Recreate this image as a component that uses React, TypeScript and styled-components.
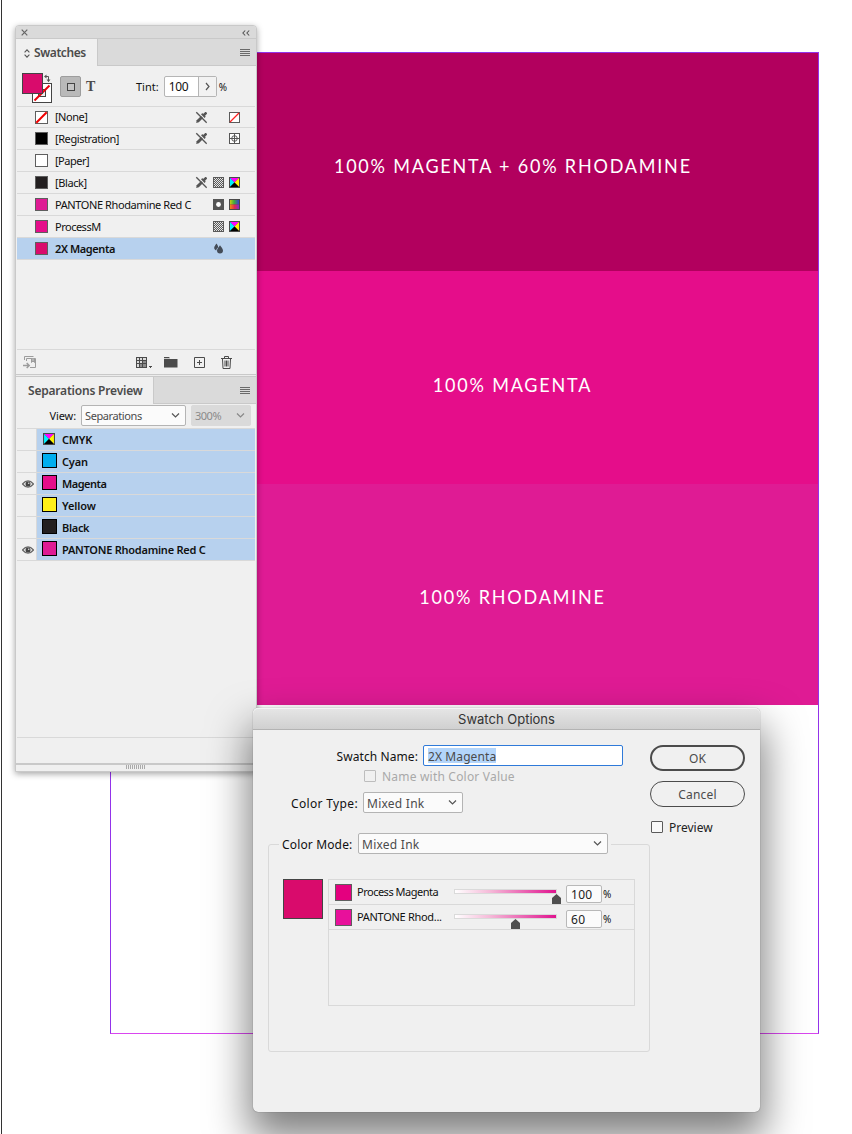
import React from "react";
import styled, { createGlobalStyle, css } from "styled-components";

const GlobalStyle = createGlobalStyle`
  *, *::before, *::after { box-sizing: border-box; }
  html, body { margin: 0; padding: 0; }
  body { background: #fff; overflow: hidden; }
`;

const uiFont = `"Noto Sans", "Open Sans", sans-serif`;
const line = "#d9d9d9";
const ink = "#4b4b4b";
const highlight = "#b7d1ee";

/* ---------- Desktop and artboard ---------- */

const Desktop = styled.main`
  position: relative;
  width: 852px;
  height: 1134px;
  overflow: hidden;
  background: #fff;
  border-left: 1px solid #fff;
  font-family: ${uiFont};
  font-size: 11px;
  color: #111;
  &::before {
    content: "";
    display: block;
    width: 1px;
    height: 100%;
    background: #333;
  }
`;

const Artboard = styled.section`
  position: absolute;
  left: 109px;
  top: 52px;
  width: 709px;
  height: 982px;
  border: 1px solid #9333ea;
  border-bottom-color: #d946ef;
  display: flex;
  flex-direction: column;
`;

const Band = styled.div<{ $color: string; $height: number; $drop: number }>`
  height: ${(p) => p.$height}px;
  background: ${(p) => p.$color};
  display: flex;
  align-items: center;
  justify-content: center;
  padding: ${(p) => p.$drop}px 0 0 96px;
`;

const BandText = styled.span`
  font-family: Lato, sans-serif;
  font-size: 20px;
  line-height: 24px;
  letter-spacing: 2px;
  transform: scaleX(0.9);
  color: #fff;
  white-space: nowrap;
`;

/* ---------- Panel dock ---------- */

const Dock = styled.aside`
  position: absolute;
  left: 14px;
  top: 25px;
  width: 242px;
  height: 747px;
  display: flex;
  flex-direction: column;
  background: #f0f0f0;
  border: 1px solid #c9c9c9;
  border-radius: 4px 4px 0 0;
  box-shadow: 0 2px 6px rgba(0, 0, 0, 0.35);
  overflow: hidden;
`;

const DockBar = styled.header`
  height: 13px;
  flex: none;
  display: flex;
  align-items: center;
  justify-content: space-between;
  padding: 1px 6px 0 5px;
  background: #dadada;
  border-bottom: 1px solid #c9c9c9;
`;

const TabRow = styled.div`
  height: 27px;
  flex: none;
  display: flex;
`;

const Tab = styled.div<{ $width: number; $indent: number }>`
  width: ${(p) => p.$width}px;
  padding: 1px 0 0 ${(p) => p.$indent}px;
  display: flex;
  align-items: center;
  gap: 4px;
  border-right: 1px solid #c9c9c9;
  color: ${ink};
`;

const TabFill = styled.div`
  flex: 1;
  display: flex;
  align-items: center;
  justify-content: flex-end;
  padding: 1px 6px 0 0;
  background: #dadada;
  border-bottom: 1px solid #c9c9c9;
`;

const Txt = styled.span<{ $size?: number; $track?: number; $bold?: boolean; $color?: string; $down?: number }>`
  min-width: 0;
  padding-top: ${(p) => p.$down ?? 0}px;
  font-size: ${(p) => p.$size ?? 11}px;
  line-height: 16px;
  letter-spacing: ${(p) => p.$track ?? 0}px;
  font-weight: ${(p) => (p.$bold ? 600 : 400)};
  color: ${(p) => p.$color ?? "inherit"};
  white-space: nowrap;
`;

const TintBar = styled.div`
  height: 40px;
  flex: none;
  display: flex;
  align-items: center;
  padding: 1px 0 0 6px;
`;

const FillStrokeBox = styled.div`
  width: 31px;
  padding-top: 3px;
  svg { display: block; }
`;

const TextToggle = styled.span`
  width: 12px;
  margin-left: 5px;
  font: 700 14px/16px "Liberation Serif", serif;
  color: ${ink};
`;

const FormatToggle = styled.div`
  width: 21px;
  height: 21px;
  margin-left: 7px;
  border: 1px solid #9d9d9d;
  border-radius: 2px;
  background: #b9b9b9;
  display: grid;
  place-items: center;
`;

const TintField = styled.div`
  width: 53px;
  height: 21px;
  margin: 0 2px 0 5px;
  border: 1px solid #b5b5b5;
  border-radius: 2px;
  background: #fff;
  display: flex;
  align-items: center;
  padding-left: 4px;
`;

const TintStep = styled.span`
  width: 18px;
  height: 19px;
  margin-left: auto;
  background: #f2f2f2;
  border-left: 1px solid #b5b5b5;
  display: grid;
  place-items: center;
`;

const SwatchList = styled.div`
  height: 244px;
  flex: none;
  margin: 0 1px;
  border-top: 1px solid ${line};
  border-bottom: 1px solid ${line};
`;

const SwatchRow = styled.div<{ $active?: boolean }>`
  height: 22px;
  display: flex;
  align-items: center;
  gap: 7px;
  padding: 0 15px 0 18px;
  border-bottom: 1px solid ${line};
  background: ${(p) => (p.$active ? highlight : "transparent")};
  &:first-child { height: 21px; }
`;

const Chip = styled.span<{ $color: string; $size?: number; $edge?: string }>`
  width: ${(p) => p.$size ?? 13}px;
  height: ${(p) => p.$size ?? 13}px;
  flex: none;
  background: ${(p) => p.$color};
  border: 1px solid ${(p) => p.$edge ?? "#5e5e5e"};
`;

const RowIcons = styled.div`
  flex: none;
  margin-left: auto;
  display: grid;
  grid-template-columns: 13px 11px 11px;
  column-gap: 5px;
  align-items: center;
  svg { display: block; }
`;

const PanelFooter = styled.div`
  height: 24px;
  flex: none;
  display: flex;
  align-items: center;
  padding: 0 24px 0 7px;
`;

const FooterTools = styled.div`
  margin-left: auto;
  display: flex;
  align-items: center;
`;

const Gap = styled.span<{ $w: number }>`
  width: ${(p) => p.$w}px;
`;

const PanelSplit = styled.div`
  height: 3px;
  flex: none;
  background: #ececec;
  border-top: 1px solid #c9c9c9;
  border-bottom: 1px solid #c9c9c9;
`;

const ViewBar = styled.div`
  height: 24px;
  flex: none;
  display: flex;
  align-items: flex-start;
  justify-content: flex-end;
  padding: 1px 5px 0 0;
  gap: 5px;
`;

const Select = styled.div<{ $width: number; $disabled?: boolean }>`
  width: ${(p) => p.$width}px;
  height: 21px;
  flex: none;
  display: flex;
  align-items: center;
  justify-content: space-between;
  padding: 0 5px 0 3px;
  border: 1px solid #b4b4b4;
  border-radius: 2px;
  background: #fbfbfb;
  color: ${ink};
  ${(p) =>
    p.$disabled &&
    css`
      background: #dadada;
      border-color: #dadada;
      color: #8a8a8a;
    `}
`;

const InkList = styled.div`
  height: 310px;
  flex: none;
  margin: 0 1px;
  border-top: 1px solid ${line};
  border-bottom: 1px solid ${line};
`;

const InkRow = styled.div`
  height: 22px;
  display: flex;
  border-bottom: 1px solid ${line};
`;

const EyeCell = styled.div`
  width: 20px;
  display: grid;
  place-items: center;
  padding-left: 3px;
  border-right: 1px solid ${line};
`;

const InkCell = styled.div`
  flex: 1;
  display: flex;
  align-items: center;
  background: ${highlight};
  padding-left: 5px;
`;

const InkMark = styled.span`
  width: 20px;
  display: flex;
  padding: 0 0 2px 0;
  svg { margin-left: 1px; }
`;

const DockFoot = styled.footer`
  flex: 1;
  display: flex;
  flex-direction: column;
  justify-content: flex-end;
`;

const GripBar = styled.div`
  height: 8px;
  border-top: 2px solid #c9c9c9;
  display: flex;
  justify-content: center;
  padding-right: 2px;
  gap: 1px;
`;

const GripTick = styled.i`
  width: 1px;
  height: 4px;
  background: #aaa;
`;

/* ---------- Dialog ---------- */

const Dialog = styled.section`
  position: absolute;
  left: 252px;
  top: 708px;
  width: 507px;
  height: 404px;
  display: flex;
  flex-direction: column;
  background: #f0f0f0;
  border-radius: 5px;
  box-shadow: 0 0 1px rgba(0, 0, 0, 0.6), 0 22px 40px 4px rgba(0, 0, 0, 0.5);
`;

const TitleBar = styled.header`
  height: 22px;
  flex: none;
  display: flex;
  align-items: center;
  justify-content: center;
  border-bottom: 1px solid #b3b3b3;
  border-radius: 5px 5px 0 0;
  background: linear-gradient(#e6e6e6, #d0d0d0);
  box-shadow: inset 0 1px 0 #f4f4f4;
  font-family: Inter, Roboto, sans-serif;
  color: #333;
`;

const DialogBody = styled.div`
  flex: 1;
  display: flex;
  padding: 15px 15px 0 15px;
`;

const Form = styled.div`
  width: 382px;
  display: flex;
  flex-direction: column;
`;

const FieldRow = styled.div<{ $indent: number; $height: number; $top?: number; $gap: number }>`
  height: ${(p) => p.$height}px;
  margin-top: ${(p) => p.$top ?? 0}px;
  padding-left: ${(p) => p.$indent}px;
  display: flex;
  align-items: center;
  gap: ${(p) => p.$gap}px;
`;

const FieldLabel = styled.label<{ $width: number }>`
  width: ${(p) => p.$width}px;
  display: flex;
  justify-content: flex-end;
  color: #111;
`;

const NameInput = styled.div`
  width: 200px;
  height: 21px;
  display: flex;
  align-items: center;
  padding-left: 4px;
  border: 1px solid #2f7ad9;
  border-radius: 2px;
  background: #fff;
`;

const Selected = styled.span`
  height: 15px;
  display: flex;
  align-items: center;
  background: #b3d5fb;
  color: ${ink};
`;

const CheckBox = styled.span<{ $dim?: boolean }>`
  width: 12px;
  height: 12px;
  flex: none;
  border: 1px solid ${(p) => (p.$dim ? "#bdbdbd" : "#5a5a5a")};
  border-radius: 1px;
  background: ${(p) => (p.$dim ? "transparent" : "#f8f8f8")};
`;

const ModeGroup = styled.fieldset`
  height: 219px;
  min-width: 0;
  margin: 20px 0 0;
  padding: 23px 14px 0 14px;
  border: 1px solid ${line};
  border-radius: 3px;
`;

const ModeLegend = styled.legend`
  height: 23px;
  width: 332px;
  margin-left: -4px;
  padding: 0 3px 0 3px;
  display: flex;
  align-items: flex-start;
  justify-content: space-between;
`;

const MixArea = styled.div`
  display: flex;
  gap: 5px;
`;

const MixList = styled.div`
  width: 307px;
  height: 127px;
  border: 1px solid ${line};
`;

const MixRow = styled.div`
  height: 25px;
  display: flex;
  align-items: center;
  padding-left: 6px;
  border-bottom: 1px solid ${line};
`;

const MixName = styled.span`
  width: 97px;
  margin-left: 5px;
  display: flex;
`;

const Slider = styled.span`
  width: 103px;
  height: 24px;
  padding-top: 9px;
  position: relative;
  &::before {
    content: "";
    display: block;
    height: 5px;
    border: 1px solid #dadada;
    background: linear-gradient(90deg, #fff, #f5b9d8 35%, #e0148f);
  }
  svg {
    position: absolute;
    top: 14px;
    margin-left: -5px;
  }
`;

const Amount = styled.span`
  width: 36px;
  height: 18px;
  margin: 4px 1px 0 9px;
  padding-left: 4px;
  display: flex;
  align-items: center;
  border: 1px solid #b8b8b8;
  border-radius: 2px;
  background: #fbfbfb;
  color: #222;
`;

const Percent = styled.span`
  margin-top: 4px;
  display: flex;
`;

const Actions = styled.div`
  width: 95px;
  display: flex;
  flex-direction: column;
`;

const PillButton = styled.button<{ $primary?: boolean }>`
  height: 26px;
  margin: 0 0 10px;
  padding: 1px 0 0;
  display: flex;
  align-items: center;
  justify-content: center;
  border: ${(p) => (p.$primary ? 2 : 1)}px solid ${ink};
  border-radius: 13px;
  background: transparent;
  font-family: inherit;
  color: ${ink};
`;

const PreviewRow = styled.label`
  margin: 1px 0 0 1px;
  display: flex;
  align-items: center;
  gap: 6px;
  color: #222;
`;

/* ---------- Drawings ---------- */

const Chevron = ({ color = "#555", dir = "down" }: { color?: string; dir?: "down" | "right" }) => (
  <svg width="9" height="9" viewBox="0 0 9 9" fill="none" stroke={color} strokeWidth="1.2">
    <path d={dir === "down" ? "M1 2.5L4.5 6L8 2.5" : "M3 1L6 4.5L3 8"} />
  </svg>
);

const MenuIcon = () => (
  <svg width="10" height="8" viewBox="0 0 10 8" stroke="#6a6a6a" shapeRendering="crispEdges">
    <path d="M0 .5h10M0 2.5h10M0 4.5h10M0 6.5h10" />
  </svg>
);

const CloseIcon = () => (
  <svg width="7" height="7" viewBox="0 0 7 7" stroke="#666" strokeWidth="1.2">
    <path d="M.7.7l5.600 5.600M6.300.7l-5.600 5.600" />
  </svg>
);

const CollapseIcon = () => (
  <svg width="8" height="6" viewBox="0 0 8 6" fill="none" stroke="#555" strokeWidth="1.1">
    <path d="M3.2.5L.9 3l2.3 2.5M7.2.5L4.9 3l2.3 2.5" />
  </svg>
);

const SortIcon = () => (
  <svg width="6" height="9" viewBox="0 0 6 9" fill="none" stroke="#555" strokeWidth="1.1">
    <path d="M.6 3.4L3 .9l2.4 2.5M.6 5.6L3 8.1l2.4-2.5" />
  </svg>
);

const FillStroke = () => (
  <svg width="31" height="31" viewBox="0 0 31 31">
    <rect x="10.5" y="10.5" width="19" height="19" fill="#fff" stroke="#444" />
    <rect x="16.5" y="16.5" width="7" height="7" fill="#f0f0f0" stroke="#444" />
    <path d="M12.5 27.5L27.5 12.5" stroke="#e8000b" strokeWidth="2" />
    <rect x=".5" y=".5" width="20" height="20" fill="#d90b6c" stroke="#444" />
    <path d="M24 3.5h2.5v5" fill="none" stroke="#555" />
    <path d="M22 3.5l2.5-2v4zM24.5 6.5h4l-2 2.5z" fill="#555" />
  </svg>
);

const NoneChip = () => (
  <svg width="13" height="13" viewBox="0 0 13 13">
    <rect x=".5" y=".5" width="12" height="12" fill="#fff" stroke="#5e5e5e" />
    <path d="M1.3 11.7L11.7 1.3" stroke="#f00000" strokeWidth="2" />
  </svg>
);

const LockedIcon = () => (
  <svg width="13" height="13" viewBox="0 0 13 13">
    <path d="M1.200 12l.5-2.700L6.300 4.700l2 2L3.800 11.300z" fill="#555" />
    <path d="M6 3.300l1.200-1 1.300.5 1.700-1.800q1.800-.4 1.900 1.700l-1.900 1.900.4 1.200-1 1.200z" fill="#555" />
    <path d="M2.600 1L12.600 11" stroke="#f0f0f0" strokeWidth="1" />
    <path d="M1.300 1.300L11.700 11.700" stroke="#555" strokeWidth="1.300" />
  </svg>
);

const NoneMode = () => (
  <svg width="11" height="11" viewBox="0 0 11 11">
    <rect x=".5" y=".5" width="10" height="10" fill="#fff" stroke="#5a5a5a" />
    <path d="M1 10L10 1" stroke="#f22" strokeWidth="1.200" />
  </svg>
);

const RegistrationMode = () => (
  <svg width="11" height="11" viewBox="0 0 11 11" fill="none" stroke="#555">
    <rect x=".5" y=".5" width="10" height="10" fill="#fff" />
    <circle cx="5.5" cy="5.5" r="2.8" />
    <path d="M5.5 1v9M1 5.5h9" />
  </svg>
);

const checker: string = Array.from({ length: 9 }, (_, y) =>
  Array.from({ length: 9 }, (_, x) => ((x + y) % 2 ? `M${x + 1} ${y + 1}h1v1h-1z` : "")).join("")
).join("");

const ProcessType = () => (
  <svg width="11" height="11" viewBox="0 0 11 11" shapeRendering="crispEdges">
    <rect x=".5" y=".5" width="10" height="10" fill="#e4e4e4" stroke="#5a5a5a" />
    <path d={checker} fill="#5a5a5a" />
  </svg>
);

const SpotType = () => (
  <svg width="11" height="11" viewBox="0 0 11 11">
    <rect width="11" height="11" fill="#555" />
    <circle cx="5.5" cy="5.5" r="2.4" fill="#fff" />
  </svg>
);

const CmykMode = ({ size = 11 }: { size?: number }) => (
  <svg width={size} height={size} viewBox="0 0 11 11">
    <rect width="11" height="11" fill="#4a4a4a" />
    <path d="M1 1h9L5.5 5.5z" fill="#ff00ff" />
    <path d="M1 1v9l4.5-4.5z" fill="#00f0ff" />
    <path d="M10 1v9L5.5 5.5z" fill="#fff200" />
    <path d="M1 10h9L5.5 5.5z" fill="#000" />
  </svg>
);

const LabMode = () => (
  <svg width="11" height="11" viewBox="0 0 11 11">
    <defs>
      <linearGradient id="labTop">
        <stop offset="0" stopColor="#c8cc10" />
        <stop offset=".45" stopColor="#3fae3a" />
        <stop offset="1" stopColor="#3a40d0" />
      </linearGradient>
      <linearGradient id="labBottom">
        <stop offset="0" stopColor="#f08a10" />
        <stop offset=".5" stopColor="#e02a50" />
        <stop offset="1" stopColor="#8a28c8" />
      </linearGradient>
    </defs>
    <rect width="11" height="11" fill="#4a4a4a" />
    <rect x="1" y="1" width="9" height="4.5" fill="url(#labTop)" />
    <rect x="1" y="5.5" width="9" height="4.5" fill="url(#labBottom)" />
  </svg>
);

const MixedType = () => (
  <svg width="11" height="11" viewBox="0 0 11 11" fill="#444c58">
    <path d="M3.4.6C4.5 2 5.3 3.2 5 4.4c-1.2.8-1.7 1.9-1.7 3C1.9 7 1 6 1.2 4.6 1.4 3.3 2.6 2.1 3.4.6z" />
    <path d="M7 2.2c1 1.900 3 3.300 3 5.300a3 3 0 0 1-6 0c0-2 2-3.400 3-5.300z" />
  </svg>
);

const ImportIcon = () => (
  <svg width="14" height="14" viewBox="0 0 14 14" fill="none" stroke="#9c9c9c">
    <path d="M1.500 5V1.500h9M3.500 6V3.500h9v9H7" />
    <path d="M8.500 3.500v4l1.500-1.500 1.500 1.500v-4" fill="#b5b5b5" />
    <path d="M0 10.500h6M3.700 8l2.500 2.500L3.700 13" strokeWidth="1.500" />
  </svg>
);

const GridIcon = () => (
  <svg width="16" height="13" viewBox="0 0 16 13" shapeRendering="crispEdges">
    <rect x="0" y="1" width="11" height="11" fill="#4b4b4b" />
    <path d="M1 2h2v2H1zM4 2h2v2H4zM7 2h3v2H7zM4 5h2v2H4zM1 5h2v2H1zM1 8h2v3H1z" fill="#dcdcdc" />
    <path d="M7 5h3v2H7zM4 8h2v3H4zM7 8h3v3H7z" fill="#8c8c8c" />
    <path d="M12 10h4l-2 2z" fill="#4b4b4b" />
  </svg>
);

const FolderIcon = () => (
  <svg width="14" height="11" viewBox="0 0 14 11" fill="#4b4b4b">
    <path d="M0 0h5l1 1.200H0zM0 2h13.500v8.500H0z" />
  </svg>
);

const PlusIcon = () => (
  <svg width="11" height="11" viewBox="0 0 11 11" fill="none" stroke="#4b4b4b">
    <path d="M.5.5h10v10H.5zM5.500 3v5M3 5.500h5" />
  </svg>
);

const TrashIcon = () => (
  <svg width="11" height="13" viewBox="0 0 11 13" fill="none" stroke="#4b4b4b">
    <path d="M0 2.500h11M3.500 2V.5h4V2M1.500 3l.5 9.500h7l.5-9.500M4 4.500v6M5.500 4.500v6M7 4.500v6" />
  </svg>
);

const EyeIcon = () => (
  <svg width="12" height="8" viewBox="0 0 12 8">
    <path d="M.5 4Q6-2.300 11.500 4Q6 10.300.5 4z" fill="#f0f0f0" stroke="#666" strokeWidth="1.200" />
    <circle cx="6" cy="4" r="2.500" fill="#444" />
    <circle cx="6.700" cy="3.300" r=".8" fill="#ddd" />
  </svg>
);

const Thumb = ({ value }: { value: number }) => (
  <svg width="9" height="10" viewBox="0 0 9 10" style={{ left: `${value}%` }}>
    <path d="M0 10V4L4.500 0L9 4v6z" fill="#4f4f4f" />
  </svg>
);

/* ---------- Data ---------- */

type Swatch = {
  name: string;
  color?: string;
  track: number;
  locked?: boolean;
  type?: React.ReactNode;
  mode?: React.ReactNode;
  active?: boolean;
};

const swatches: Swatch[] = [
  { name: "[None]", track: -0.5, locked: true, mode: <NoneMode /> },
  { name: "[Registration]", color: "#000", track: -0.42, locked: true, mode: <RegistrationMode /> },
  { name: "[Paper]", color: "#fff", track: -0.5 },
  { name: "[Black]", color: "#231f20", track: -0.4, locked: true, type: <ProcessType />, mode: <CmykMode /> },
  { name: "PANTONE Rhodamine Red C", color: "#df1b94", track: -0.4, type: <SpotType />, mode: <LabMode /> },
  { name: "ProcessM", color: "#e50d8a", track: -0.5, type: <ProcessType />, mode: <CmykMode /> },
  { name: "2X Magenta", color: "#d90b6c", track: -0.4, type: <MixedType />, active: true },
];

const inks = [
  { name: "CMYK", track: -0.2 },
  { name: "Cyan", color: "#00aeef", track: -0.2 },
  { name: "Magenta", color: "#e50d8a", track: -0.5, visible: true },
  { name: "Yellow", color: "#fff01a", track: -0.1 },
  { name: "Black", color: "#231f20", track: -0.3 },
  { name: "PANTONE Rhodamine Red C", color: "#df1b94", track: -0.25, visible: true },
];

const mix = [
  { name: "Process Magenta", color: "#e4007f", value: 100, track: -0.5 },
  { name: "PANTONE Rhod...", color: "#e8109b", value: 60, track: -0.3 },
];

/* ---------- Views ---------- */

const SwatchesPanel = () => (
  <>
    <TabRow>
      <Tab $width={82} $indent={8}>
        <SortIcon />
        <Txt $size={12} $bold $track={-0.4}>Swatches</Txt>
      </Tab>
      <TabFill><MenuIcon /></TabFill>
    </TabRow>
    <TintBar>
      <FillStrokeBox><FillStroke /></FillStrokeBox>
      <FormatToggle>
        <Chip $color="#c4c4c4" $size={8} $edge="#444" />
      </FormatToggle>
      <TextToggle>T</TextToggle>
      <Gap $w={38} />
      <Txt>Tint:</Txt>
      <TintField>
        <Txt $size={12} $track={-0.3}>100</Txt>
        <TintStep><Chevron dir="right" /></TintStep>
      </TintField>
      <Txt $size={10}>%</Txt>
    </TintBar>
    <SwatchList>
      {swatches.map((s) => (
        <SwatchRow key={s.name} $active={s.active}>
          {s.color ? <Chip $color={s.color} /> : <NoneChip />}
          <Txt $bold={s.active} $track={s.track}>{s.name}</Txt>
          <RowIcons>
            <span>{s.locked && <LockedIcon />}</span>
            <span>{s.type}</span>
            <span>{s.mode}</span>
          </RowIcons>
        </SwatchRow>
      ))}
    </SwatchList>
    <PanelFooter>
      <ImportIcon />
      <FooterTools>
        <GridIcon />
        <Gap $w={12} />
        <FolderIcon />
        <Gap $w={16} />
        <PlusIcon />
        <Gap $w={16} />
        <TrashIcon />
      </FooterTools>
    </PanelFooter>
  </>
);

const SeparationsPanel = () => (
  <>
    <TabRow>
      <Tab $width={138} $indent={12}>
        <Txt $size={12} $bold $track={-0.2}>Separations Preview</Txt>
      </Tab>
      <TabFill><MenuIcon /></TabFill>
    </TabRow>
    <ViewBar>
      <Txt $down={3} $track={-0.1}>View:</Txt>
      <Select $width={105}>
        <Txt $track={-0.4}>Separations</Txt>
        <Chevron />
      </Select>
      <Select $width={60} $disabled>
        <Txt $track={-0.5}>300%</Txt>
        <Chevron color="#888" />
      </Select>
    </ViewBar>
    <InkList>
      {inks.map((i) => (
        <InkRow key={i.name}>
          <EyeCell>{i.visible && <EyeIcon />}</EyeCell>
          <InkCell>
            <InkMark>{i.color ? <Chip $color={i.color} $size={15} $edge="#000" /> : <CmykMode size={12} />}</InkMark>
            <Txt $bold $track={i.track}>{i.name}</Txt>
          </InkCell>
        </InkRow>
      ))}
    </InkList>
  </>
);

const SwatchOptions = () => (
  <Dialog>
    <TitleBar>
      <Txt $size={13}>Swatch Options</Txt>
    </TitleBar>
    <DialogBody>
      <Form>
        <FieldRow $indent={0} $height={21} $gap={5}>
          <FieldLabel $width={150}><Txt $size={12} $down={2} $track={0.08}>Swatch Name:</Txt></FieldLabel>
          <NameInput><Selected><Txt $size={12} $down={2} $track={0.1}>2X Magenta</Txt></Selected></NameInput>
        </FieldRow>
        <FieldRow $indent={96} $height={20} $gap={6}>
          <CheckBox $dim />
          <Txt $size={12} $color="#a9a9a9" $down={2} $track={0.2}>Name with Color Value</Txt>
        </FieldRow>
        <FieldRow $indent={0} $height={21} $top={6} $gap={5}>
          <FieldLabel $width={90}><Txt $size={12} $down={2} $track={0.35}>Color Type:</Txt></FieldLabel>
          <Select $width={100}><Txt $size={12} $down={2} $track={0.25}>Mixed Ink</Txt><Chevron /></Select>
        </FieldRow>
        <ModeGroup>
          <ModeLegend>
            <Txt $size={12} $down={4} $track={0.15}>Color Mode:</Txt>
            <Select $width={250}><Txt $size={12} $down={2} $track={0.25}>Mixed Ink</Txt><Chevron /></Select>
          </ModeLegend>
          <MixArea>
            <Chip $color="#d90b6c" $size={40} $edge="#444" />
            <MixList>
              {mix.map((m) => (
                <MixRow key={m.name}>
                  <Chip $color={m.color} $size={17} />
                  <MixName><Txt $track={m.track}>{m.name}</Txt></MixName>
                  <Slider><Thumb value={m.value} /></Slider>
                  <Amount><Txt $size={12} $down={2} $track={0.3}>{m.value}</Txt></Amount>
                  <Percent><Txt $size={10}>%</Txt></Percent>
                </MixRow>
              ))}
            </MixList>
          </MixArea>
        </ModeGroup>
      </Form>
      <Actions>
        <PillButton $primary><Txt $size={12}>OK</Txt></PillButton>
        <PillButton><Txt $size={12} $down={1} $track={0.2}>Cancel</Txt></PillButton>
        <PreviewRow><CheckBox /><Txt $size={12} $down={2}>Preview</Txt></PreviewRow>
      </Actions>
    </DialogBody>
  </Dialog>
);

export default function App() {
  return (
    <>
      <GlobalStyle />
      <Desktop>
        <Artboard>
          <Band $color="#b2005e" $height={218} $drop={6}>
            <BandText>100% MAGENTA + 60% RHODAMINE</BandText>
          </Band>
          <Band $color="#e50d8a" $height={213} $drop={12}>
            <BandText>100% MAGENTA</BandText>
          </Band>
          <Band $color="#df1b94" $height={221} $drop={2}>
            <BandText>100% RHODAMINE</BandText>
          </Band>
        </Artboard>
        <Dock>
          <DockBar><CloseIcon /><CollapseIcon /></DockBar>
          <SwatchesPanel />
          <PanelSplit />
          <SeparationsPanel />
          <DockFoot>
            <GripBar>
              {Array.from({ length: 10 }, (_, i) => <GripTick key={i} />)}
            </GripBar>
          </DockFoot>
        </Dock>
        <SwatchOptions />
      </Desktop>
    </>
  );
}
